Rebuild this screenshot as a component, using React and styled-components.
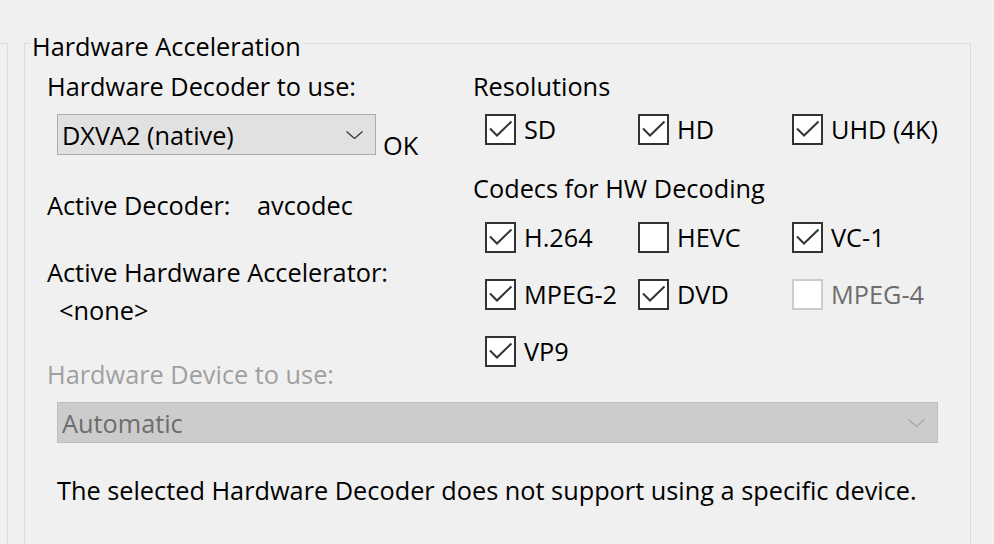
import React from "react";
import styled, { createGlobalStyle } from "styled-components";

const GlobalStyle = createGlobalStyle`
  html, body {
    margin: 0;
    padding: 0;
    background: #f0f0f0;
    overflow: hidden;
  }
  body {
    font-family: "Open Sans", "Noto Sans", sans-serif;
    font-size: 25.3px;
    color: #000;
  }
`;

const Page = styled.div`
  display: flex;
  height: 544px;
  padding-top: 43px;
  box-sizing: border-box;
  overflow: hidden;
`;

const PrevGroup = styled.div`
  width: 7px;
  border-top: 1px solid #dcdcdc;
  border-right: 1px solid #dcdcdc;
`;

const GroupBox = styled.div`
  position: relative;
  margin-left: 16px;
  width: 947px;
  box-sizing: border-box;
  border: 1px solid #dcdcdc;
  border-bottom: none;
  padding: 24px 0 0 22px;
`;

const Legend = styled.div`
  position: absolute;
  top: -16px;
  left: 5px;
  padding: 0 3px 0 2px;
  line-height: 36px;
  background: #f0f0f0;
`;

const Grid = styled.div`
  display: grid;
  grid-template-columns: 426px 1fr;
  align-items: start;
`;

const Text = styled.div`
  line-height: 36px;
  white-space: nowrap;
  color: ${(p) => (p.disabled ? "#a0a0a0" : "#000")};
  margin-top: ${(p) => p.mt || 0}px;
  margin-left: ${(p) => p.ml || 0}px;
`;

const InfoLabel = styled.span`
  display: inline-block;
  width: 210px;
`;

const SelectRow = styled.div`
  display: flex;
  align-items: flex-end;
  margin-top: 10px;
`;

const Select = styled.div`
  display: flex;
  align-items: center;
  justify-content: space-between;
  box-sizing: border-box;
  width: ${(p) => p.width}px;
  height: ${(p) => p.height}px;
  margin-left: 10px;
  padding: 0 12px 0 4px;
  background: ${(p) => (p.disabled ? "#cccccc" : "#e1e1e1")};
  border: 1px solid ${(p) => (p.disabled ? "#bfbfbf" : "#adadad")};
  color: ${(p) => (p.disabled ? "#6d6d6d" : "#000")};
  line-height: 36px;
  white-space: nowrap;
`;

const OkText = styled.span`
  margin-left: 7px;
  line-height: 36px;
  margin-bottom: -8px;
`;

const RightCol = styled.div`
  grid-column: 2;
  grid-row: 1 / 7;
`;

const CheckGrid = styled.div`
  display: grid;
  grid-template-columns: 153px 154px auto;
  row-gap: 26px;
  padding-left: 12px;
  margin-top: ${(p) => p.mt}px;
`;

const CheckItem = styled.label`
  display: flex;
  align-items: center;
  height: 31px;
  gap: 8px;
  line-height: 31px;
  white-space: nowrap;
  color: ${(p) => (p.disabled ? "#6d6d6d" : "#000")};
`;

const Box = styled.span`
  display: block;
  flex: none;
  width: 31px;
  height: 31px;
  box-sizing: border-box;
  background: #fff;
  border: 2px solid ${(p) => (p.disabled ? "#cccccc" : "#333333")};

  svg {
    display: block;
  }
`;

const Chevron = ({ color }) => (
  <svg width="17" height="8" viewBox="0 0 17 8">
    <polyline
      points="0.5,0.5 8.5,7.5 16.5,0.5"
      fill="none"
      stroke={color}
      strokeWidth="1.2"
    />
  </svg>
);

const Check = ({ label, checked, disabled }) => (
  <CheckItem disabled={disabled}>
    <Box disabled={disabled}>
      {checked && (
        <svg width="27" height="27" viewBox="0 0 27 27">
          <polyline
            points="3,12.5 10,19.5 24.5,5.5"
            fill="none"
            stroke="#333"
            strokeWidth="2"
          />
        </svg>
      )}
    </Box>
    {label}
  </CheckItem>
);

const resolutions = [
  { label: "SD", checked: true },
  { label: "HD", checked: true },
  { label: "UHD (4K)", checked: true },
];

const codecs = [
  { label: "H.264", checked: true },
  { label: "HEVC", checked: false },
  { label: "VC-1", checked: true },
  { label: "MPEG-2", checked: true },
  { label: "DVD", checked: true },
  { label: "MPEG-4", checked: false, disabled: true },
  { label: "VP9", checked: true },
];

export default function App() {
  return (
    <>
      <GlobalStyle />
      <Page>
        <PrevGroup />
        <GroupBox>
          <Legend>Hardware Acceleration</Legend>
          <Grid>
            <Text>Hardware Decoder to use:</Text>
            <SelectRow>
              <Select width={319} height={41}>
                <span>DXVA2 (native)</span>
                <Chevron color="#333" />
              </Select>
              <OkText>OK</OkText>
            </SelectRow>
            <Text mt={32}>
              <InfoLabel>Active Decoder:</InfoLabel>avcodec
            </Text>
            <Text mt={31}>Active Hardware Accelerator:</Text>
            <Text mt={2} ml={12}>
              &lt;none&gt;
            </Text>
            <Text mt={28} disabled>
              Hardware Device to use:
            </Text>
            <RightCol>
              <Text>Resolutions</Text>
              <CheckGrid mt={10}>
                {resolutions.map((r) => (
                  <Check key={r.label} {...r} />
                ))}
              </CheckGrid>
              <Text mt={25}>Codecs for HW Decoding</Text>
              <CheckGrid mt={16}>
                {codecs.map((c) => (
                  <Check key={c.label} {...c} />
                ))}
              </CheckGrid>
            </RightCol>
          </Grid>
          <SelectRow>
            <Select width={881} height={41} disabled>
              <span>Automatic</span>
              <Chevron color="#a6a6a6" />
            </Select>
          </SelectRow>
          <Text mt={29} ml={10}>
            The selected Hardware Decoder does not support using a specific
            device.
          </Text>
        </GroupBox>
      </Page>
    </>
  );
}
